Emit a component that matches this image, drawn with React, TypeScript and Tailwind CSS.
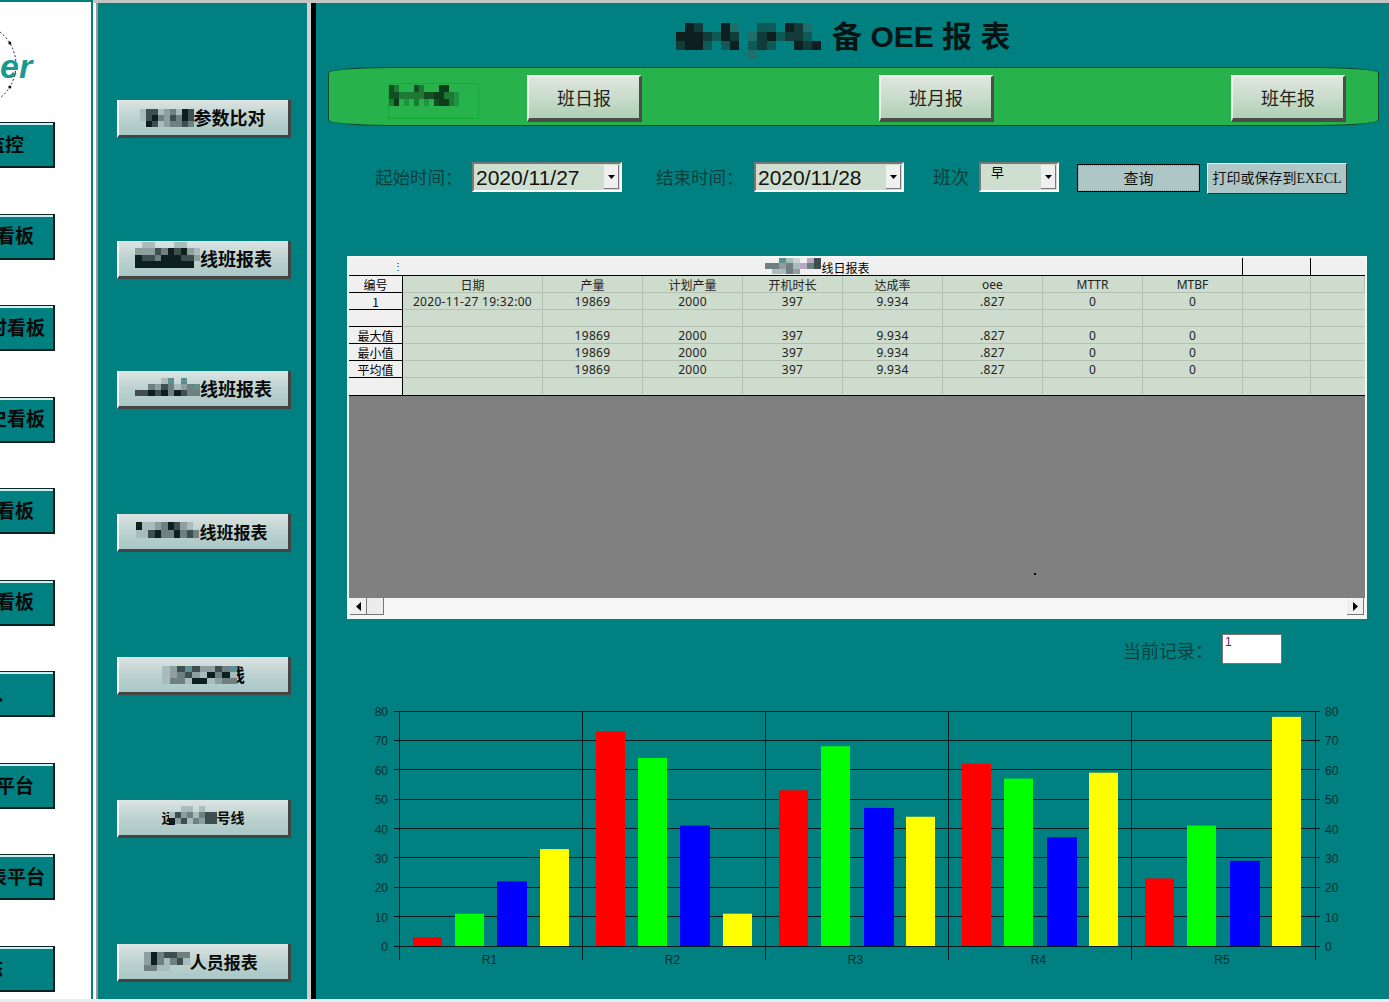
import React from "react";

const PAL: Record<string, string> = {
  ".": "transparent", k: "#0d1f1f", K: "#243232", d: "#3f4f4f", m: "#6f8080", g: "#8f9f9f", l: "#a9bcbc",
  t: "#5f9090", c: "#0d5a57", b: "#123c3a", p: "#b7a9c0", w: "#c9d2d2", e: "#1f6f6c",
  G: "#134f22", H: "#1c7a35", J: "#0e3d1c", f: "#1e9440",
};
const CJK = { fontFamily: '"Noto Sans CJK SC", "Liberation Sans", sans-serif' };
const LAT = { fontFamily: '"Noto Sans", "Noto Sans CJK SC", sans-serif' };

function Mosaic({ rows, w, h, className = "" }: { rows: string[]; w: number; h: number; className?: string }) {
  return (
    <span className={"inline-flex flex-col shrink-0 " + className}>
      {rows.map((r, i) => (
        <span key={i} className="flex">
          {r.split("").map((c, j) => (
            <span key={j} className="block" style={{ width: w, height: h, background: PAL[c] }} />
          ))}
        </span>
      ))}
    </span>
  );
}

const leftBtns: [string, number][] = [
  ["设备监控", 31], ["生产看板", 21], ["实时看板", 10], ["历史看板", 10], ["质量看板", 21],
  ["设备看板", 21], ["录入", 52], ["管理平台", 21], ["报表平台", 10], ["状态", 52],
];

const midBtns: { rows: string[]; w: number; h: number; text: string; lift: string; size: number; pre?: string; textCls?: string }[] = [
  { rows: ["lddlgmlkd", "ldkmgdmkd", ".kdlgmmdm"], w: 6, h: 6, text: "参数比对", lift: "", size: 18, textCls: "mr-[2px]" },
  { rows: [".ll...ll..", "gggdmkdkgl", "kddmkkkddg", "kkkkkkkkk."], w: 6.5, h: 6.5, text: "线班报表", lift: "-mt-[8px]", size: 18 },
  { rows: ["....lt.t..", "..mgdmlgmt", "ddkdkmkdmm"], w: 6.5, h: 6, text: "线班报表", lift: "-mt-[4px]", size: 18 },
  { rows: ["kllgmkdgl.", "lldkmmkmdm"], w: 6.4, h: 8, text: "线班报表", lift: "-mt-[4px]", size: 17, textCls: "mr-[4px]" },
  { rows: ["lgdtdggdmt", "lgmdglkmkl", "lmmlkklgmm"], w: 7.5, h: 6, text: "线", lift: "relative z-10", size: 18, textCls: "-ml-[10px]" },
  { rows: ["..ll.l..", "ldgmlmdd", "kgdlmgdd"], w: 6, h: 6, text: "号线", lift: "relative z-10 -mt-[5px]", size: 14, pre: "运", textCls: "mr-[1px]" },
  { rows: ["gkmddmm", "gkmlmdl", "mmll..."], w: 6.5, h: 6.5, text: "人员报表", lift: "", size: 17, textCls: "mr-[5px]" },
];
const midTops = [97, 103, 92, 105, 105, 105, 106];

const cols = ["编号", "日期", "产量", "计划产量", "开机时长", "达成率", "oee", "MTTR", "MTBF", "", ""];
const vals = ["19869", "2000", "397", "9.934", ".827", "0", "0", "", ""];
const rows: { head: string; date: string; v: string[] }[] = [
  { head: "1", date: "2020-11-27 19:32:00", v: vals },
  { head: "", date: "", v: vals.map(() => "") },
  { head: "最大值", date: "", v: vals },
  { head: "最小值", date: "", v: vals },
  { head: "平均值", date: "", v: vals },
  { head: "", date: "", v: vals.map(() => "") },
];
const GRID = "grid grid-cols-[54px_140px_100px_100px_100px_100px_100px_100px_100px_68px_54px]";

function GreenBtn({ text, className }: { text: string; className: string }) {
  return (
    <div
      className={
        "w-[115px] h-[47px] mt-[3px] flex items-center justify-center border-l-2 border-t-2 border-l-[#eef3ee] border-t-[#eef3ee] border-r-[3px] border-b-[4px] border-r-[#4c4c4c] border-b-[#4c4c4c] bg-gradient-to-b from-[#dfe6df] via-[#c9dccb] to-[#aed0b4] text-[18px] text-[#222] shrink-0 " +
        className
      }
      style={CJK}
    >
      {text}
    </div>
  );
}

function Arrow({ dir = "down" }: { dir?: "down" | "left" | "right" }) {
  const pts = dir === "down" ? "0,0 7,0 3.5,4" : dir === "left" ? "5,0 5,9 0,4.5" : "0,0 0,9 5,4.5";
  const [w, h] = dir === "down" ? [7, 4] : [5, 9];
  return (
    <svg width={w} height={h} viewBox={`0 0 ${w} ${h}`}>
      <polygon points={pts} fill="#000" />
    </svg>
  );
}

function Drop({ text, className, small }: { text: string; className: string; small?: boolean }) {
  return (
    <div className={"h-[30px] mt-[1px] flex border-2 border-t-[#777] border-l-[#777] border-r-white border-b-white bg-[#cfdfcf] shrink-0 " + className}>
      <div
        className={small ? "flex-1 pl-[10px] text-[13px] leading-[16px] text-black" : "flex-1 pl-[2px] text-[21px] leading-[26px] text-[#111] mt-[1px]"}
        style={small ? CJK : { fontFamily: '"Liberation Sans", sans-serif' }}
      >
        {text}
      </div>
      <div className="w-[15px] h-[24px] mt-[1px] mr-[1px] flex items-center justify-center bg-[#f0f0f0] border-r border-b border-[#777]">
        <Arrow />
      </div>
    </div>
  );
}

function Chart() {
  const X = [399, 582, 765, 948, 1131, 1315];
  const top = 711;
  const bot = 946;
  const y = (v: number) => bot - (v * (bot - top)) / 80;
  const colors = ["#ff0000", "#00ff00", "#0000ff", "#ffff00"];
  const data = [
    [3, 11, 22, 33],
    [73, 64, 41, 11],
    [53, 68, 47, 44],
    [62, 57, 37, 59],
    [23, 41, 29, 78],
  ];
  const bx = [
    [413, 455, 497, 540],
    [596, 638, 680, 723],
    [779, 821, 864, 906],
    [962, 1004, 1047, 1089],
    [1145, 1187, 1230, 1272],
  ];
  const ticks = [0, 10, 20, 30, 40, 50, 60, 70, 80];
  return (
    <svg width={1073} height={298} viewBox="316 700 1073 298" className="block" style={{ fontFamily: '"Liberation Sans", sans-serif' }}>
      {ticks.map((t) => (
        <g key={t}>
          <line x1={394} x2={1320} y1={Math.floor(y(t)) + 0.5} y2={Math.floor(y(t)) + 0.5} stroke="#041a1a" />
          <text x={388} y={y(t) + 5} textAnchor="end" fontSize={12} fill="#062e2e">{t}</text>
          <text x={1325} y={y(t) + 5} fontSize={12} fill="#062e2e">{t}</text>
        </g>
      ))}
      {X.map((x) => (
        <line key={x} x1={x + 0.5} x2={x + 0.5} y1={711} y2={960} stroke="#041a1a" />
      ))}
      {data.map((g, i) =>
        g.map((v, j) => (
          <rect key={j} x={bx[i][j]} y={y(v)} width={j === 2 ? 30 : 29} height={bot - y(v)} fill={colors[j]} />
        ))
      )}
      {["R1", "R2", "R3", "R4", "R5"].map((r, i) => (
        <text key={r} x={(X[i] + X[i + 1]) / 2 - 1} y={964} textAnchor="middle" fontSize={12} fill="#062e2e">{r}</text>
      ))}
    </svg>
  );
}

export default function App() {
  return (
    <div className="w-[1389px] h-[1002px] flex overflow-hidden bg-[#e8eeee]">
      {/* left column */}
      <div className="w-[93px] h-[999px] shrink-0 bg-white border-t-[2px] border-r-[2px] border-[#008080] flex flex-col">
        <div className="relative h-[120px] overflow-hidden">
          <svg width="24" height="100" viewBox="0 0 24 100" className="absolute left-0 top-[20px]">
            <path d="M0 10 A42 42 0 0 1 0 76" fill="none" stroke="#222" strokeWidth="1" strokeDasharray="2 2" />
            <circle cx="9.8" cy="21" r="1.5" fill="#111" />
            <circle cx="15.5" cy="43" r="1.5" fill="#111" />
            <circle cx="9.8" cy="65" r="1.5" fill="#111" />
          </svg>
          <span className="absolute left-[0px] top-[47px] text-[34px] leading-[34px] font-bold italic text-[#1a9a8e]" style={{ fontFamily: '"Liberation Sans", sans-serif' }}>er</span>
        </div>
        <div className="h-[870px] flex flex-col justify-between">
          {leftBtns.map(([t, pr], i) => (
            <div
              key={i}
              className="w-[55px] h-[46px] overflow-hidden flex items-center justify-end whitespace-nowrap bg-[#008080] border-t border-t-[#0a2a2a] border-r-2 border-b-2 border-r-[#08201f] border-b-[#08201f] pb-[1px] text-[19px] font-bold text-[#0a0a0a] shadow-[inset_0_2px_0_#cfeeee]"
              style={{ ...CJK, paddingRight: pr - 2 }}
            >
              <span className="shrink-0">{t}</span>
            </div>
          ))}
        </div>
      </div>

      <div className="flex-1 h-[999px] flex flex-col">
        <div className="h-[3px] bg-[#c4c4c4]" />
        <div className="flex-1 flex min-h-0">
          <div className="w-[3px] bg-white" />
          <div className="w-[2px] bg-[#9a9a9a]" />
          {/* middle column */}
          <div className="w-[209px] bg-[#008080] pl-[19px] flex flex-col">
            {midBtns.map((b, i) => (
              <div
                key={i}
                className="w-[174px] h-[38px] flex items-center justify-center shrink-0 border-l-2 border-l-white border-r-[3px] border-b-[3px] border-r-[#444] border-b-[#444] bg-gradient-to-b from-[#dde4e2] via-[#bcd2d0] to-[#a9c8c6] font-bold text-[#0a0a0a] whitespace-nowrap"
                style={{ ...CJK, marginTop: midTops[i], fontSize: b.size }}
              >
                {b.pre ? <span className="-mr-[7px]">{b.pre}</span> : null}
                <Mosaic rows={b.rows} w={b.w} h={b.h} className={b.lift} />
                <span className={b.textCls}>{b.text}</span>
              </div>
            ))}
          </div>
          <div className="w-[4px] bg-[#cfcfcf]" />
          <div className="w-[5px] bg-black" />
          {/* main */}
          <div className="flex-1 bg-[#008080] min-w-0">
            <div className="h-[64px] flex items-center justify-center pr-[19px] pt-[3px]">
              <Mosaic
                rows={[".kb..ke..cc.kbe.", "kkkbckb.ebkcbbc.", "bkkc.ck.cbc..kbk", "........c.......".replace(/c/g, "e")]}
                w={9.1}
                h={9}
                className="mr-[11px] mt-[9px]"
              />
              <span className="text-[30px] font-bold text-[#061414] whitespace-pre leading-[40px]" style={{ fontFamily: '"Liberation Sans", "Noto Sans CJK SC", sans-serif' }}>备 OEE 报 表</span>
            </div>
            {/* green bar */}
            <div className="ml-[12px] w-[1051px] h-[59px] bg-[#27b24c] border border-[#0d4a2c] rounded-[60px/6px] flex items-center">
              <div className="ml-[59px] mt-[8px] w-[91px] h-[36px] border border-[#12ad38] flex items-start pt-[1px] shrink-0">
                <Mosaic rows={["GH...GH...JJ..", "GGHHHHHGGJJHHf", "HJ.f.H.f.GJJHf"]} w={5} h={7} />
              </div>
              <GreenBtn text="班日报" className="ml-[48px]" />
              <GreenBtn text="班月报" className="ml-[237px]" />
              <GreenBtn text="班年报" className="ml-[237px]" />
            </div>
            {/* filter row */}
            <div className="mt-[35px] h-[33px] flex items-start whitespace-nowrap" style={CJK}>
              <span className="ml-[59px] mt-[3px] w-[80px] text-[17.5px] text-[#0c403e]">起始时间：</span>
              <Drop text="2020/11/27" className="ml-[17px] w-[150px]" />
              <span className="ml-[34px] mt-[3px] w-[80px] text-[17.5px] text-[#0c403e]">结束时间：</span>
              <Drop text="2020/11/28" className="ml-[18px] w-[150px]" />
              <span className="ml-[29px] mt-[2px] w-[36px] text-[18px] text-[#0c403e]">班次</span>
              <Drop text="早" small className="ml-[10px] w-[80px]" />
              <div className="ml-[18px] mt-[3px] w-[123px] h-[28px] flex items-center justify-center border border-black bg-[#aec6c6] outline-1 -outline-offset-2 outline-dotted outline-[#8ba0a0] text-[15px] text-[#111]">查询</div>
              <div className="ml-[7px] mt-[2px] w-[140px] h-[31px] flex items-center justify-center border border-t-white border-l-white border-r-[#333] border-b-[#333] bg-[#aec6c6] text-[14px] text-[#111]" style={{ fontFamily: '"Liberation Serif", "Noto Sans CJK SC", serif' }}>打印或保存到EXECL</div>
            </div>
            {/* table */}
            <div className="mt-[62px] ml-[31px] w-[1020px] h-[363px] border-2 border-[#f4f8f4] flex flex-col text-[12px] tracking-[0.3px] text-[#222] bg-[#f2f2f2]" style={LAT}>
              <div className={GRID + " h-[18px] bg-[#f0f0f0] border-b border-black"}>
                <div className="text-right leading-[16px] text-[10px]">⋮</div>
                <div className="col-span-8 flex items-end justify-center pr-[10px] border-r border-black overflow-hidden text-[12px] tracking-normal text-black" style={CJK}>
                  <Mosaic rows={["..tlw.pd", "mmgmlpmd", ".llmg..."]} w={7} h={5.5} className="mb-[1px]" />
                  <span className="leading-[15px]">线日报表</span>
                </div>
                <div className="border-r border-black" />
                <div />
              </div>
              <div className={GRID + " h-[17px] grid-rows-[17px] bg-[#cddccc]"}>
                {cols.map((c, i) => (
                  <div
                    key={i}
                    className={(i === 0 ? "bg-[#f0f0f0] border-b border-r border-black text-black " : "border-b border-r border-[#b3c1b3] ") + "text-center leading-[18px] tracking-normal overflow-hidden"}
                    style={i >= 6 ? LAT : CJK}
                  >
                    {c}
                  </div>
                ))}
              </div>
              {rows.map((r, ri) => (
                <div key={ri} className={GRID + " h-[17px] grid-rows-[17px] bg-[#cddccc]"}>
                  <div
                    className={"bg-[#f0f0f0] border-r border-black text-center text-black leading-[18px] tracking-normal overflow-hidden " + (ri < 5 ? "border-b" : "")}
                    style={CJK}
                  >
                    {r.head}
                  </div>
                  <div className={"border-r border-[#b3c1b3] text-center leading-[17px] overflow-hidden whitespace-nowrap " + (ri < 5 ? "border-b" : "")}>{r.date}</div>
                  {r.v.map((v, i) => (
                    <div key={i} className={"border-[#b3c1b3] text-center leading-[17px] overflow-hidden " + (i < 8 ? "border-r " : "") + (ri < 5 ? "border-b" : "")}>{v}</div>
                  ))}
                </div>
              ))}
              <div className="relative flex-1 bg-[#808080] border-t border-black">
                <span className="absolute left-[685px] top-[177px] w-[2px] h-[2px] bg-black" />
              </div>
              <div className="h-[19px] bg-[#f6f6f6] flex pb-[2px] pl-[1px] pr-[1px]">
                <div className="w-[17px] flex items-center justify-center bg-[#f0f0f0] border-r border-b border-[#777]"><Arrow dir="left" /></div>
                <div className="w-[17px] bg-[#ececec] border-r border-b border-[#777]" />
                <div className="flex-1" />
                <div className="w-[17px] flex items-center justify-center bg-[#f0f0f0] border-r border-b border-[#777]"><Arrow dir="right" /></div>
              </div>
            </div>
            {/* current record */}
            <div className="mt-[15px] h-[30px] flex items-center justify-end pr-[107px]">
              <span className="text-[18px] text-[#0c403e] mr-[9px] mt-[2px]" style={CJK}>当前记录：</span>
              <div className="w-[60px] h-[30px] bg-white border border-[#777] text-[12px] leading-[14px] pl-[2px] text-[#5a1a7a]" style={{ fontFamily: '"Liberation Sans", sans-serif' }}>1</div>
            </div>
            <div className="mt-[36px]">
              <Chart />
            </div>
          </div>
        </div>
      </div>
    </div>
  );
}
